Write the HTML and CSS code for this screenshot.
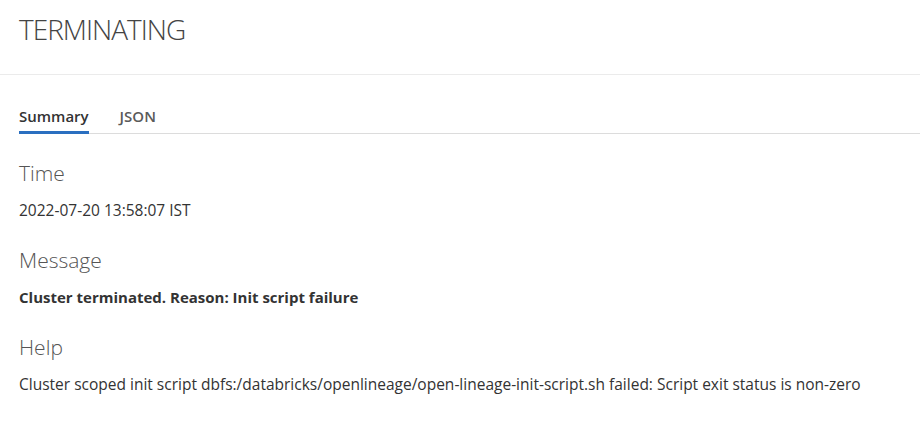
FILE: index.html
```html
<!DOCTYPE html>
<html>
<head>
<meta charset="utf-8">
<link rel="stylesheet" href="styles.css">
</head>
<body>
<div class="page">
  <header class="header">
    <h1 class="title">TERMINATING</h1>
  </header>
  <div class="content">
    <nav class="tabs">
      <div class="tab active">Summary</div>
      <div class="tab">JSON</div>
    </nav>
    <section class="field">
      <h2 class="label">Time</h2>
      <div class="value">2022-07-20 13:58:07 IST</div>
    </section>
    <section class="field">
      <h2 class="label">Message</h2>
      <div class="value bold">Cluster terminated. Reason: Init script failure</div>
    </section>
    <section class="field">
      <h2 class="label">Help</h2>
      <div class="value">Cluster scoped init script dbfs:/databricks/openlineage/open-lineage-init-script.sh failed: Script exit status is non-zero</div>
    </section>
  </div>
</div>
</body>
</html>
```
FILE: styles.css
```css
html, body {
  margin: 0;
  padding: 0;
  background: #fff;
}
body {
  font-family: "Open Sans", "Noto Sans", "Liberation Sans", sans-serif;
  color: #333;
}
.header {
  height: 75px;
  border-bottom: 1px solid #ebebeb;
  box-sizing: border-box;
  padding: 11px 19px 0;
}
.title {
  margin: 0;
  font-size: 28px;
  font-weight: 300;
  letter-spacing: -1px;
  color: #444;
  line-height: 36px;
}
.content {
  padding-left: 19px;
}
.tabs {
  display: flex;
  gap: 31px;
  border-bottom: 1px solid #dcdcdc;
  margin-top: 31px;
}
.tab {
  font-size: 15px;
  font-weight: 600;
  color: #5a5a5a;
  line-height: 20px;
  padding-bottom: 5px;
  border-bottom: 3px solid transparent;
  margin-bottom: -1px;
}
.tab.active {
  color: #333;
  border-bottom-color: #2a6fc0;
}
.field {
  margin-top: 25px;
}
.field + .field {
  margin-top: 26px;
}
.label {
  margin: 0;
  font-size: 21px;
  font-weight: 300;
  color: #555;
  line-height: 28px;
}
.value {
  margin-top: 13px;
  font-size: 15.5px;
  line-height: 20px;
  color: #333;
}
.value.bold {
  font-weight: 700;
  font-size: 15px;
}
```
